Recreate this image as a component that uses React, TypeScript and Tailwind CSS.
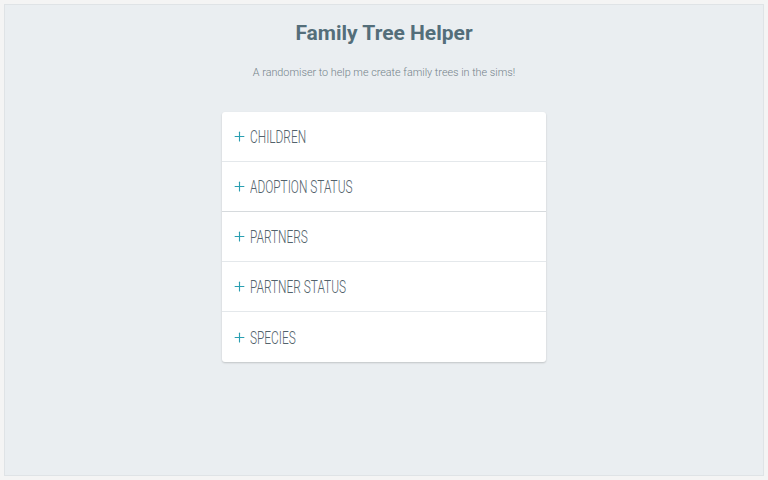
import { Plus } from 'lucide-react';

const sections = ['CHILDREN', 'ADOPTION STATUS', 'PARTNERS', 'PARTNER STATUS', 'SPECIES'];

export default function App() {
    return (
        <div className="w-[768px] h-[480px] bg-[#f4f4f4] p-[4px]">
            <div className="h-full bg-[#eaeef1] border border-[#dfe3e6] flex flex-col items-center" style={{ fontFamily: 'Roboto, "Liberation Sans", sans-serif' }}>
                <h1 className="mt-[13px] text-[21px] leading-[30px] font-bold text-[#546e7a]">Family Tree Helper</h1>
                <p className="mt-[18px] text-[10.8px] leading-[14px] font-light text-[#74828a]">A randomiser to help me create family trees in the sims!</p>
                <ul className="mt-[32px] w-[324px] bg-white rounded-[3px] shadow-[0_1px_2px_rgba(0,0,0,0.18)]">
                    {sections.map((s, i) => (
                        <li
                            key={s}
                            className={`h-[50px] flex items-center pl-[10px] ${i < sections.length - 1 ? 'border-b' : ''} ${i === 1 ? 'border-[#d6dadd]' : 'border-[#e4e8eb]'}`}
                        >
                            <Plus className="w-[15px] h-[15px] text-[#2a9fb2]" strokeWidth={1.8} />
                            <span className="ml-[3px] inline-block origin-left scale-x-[0.66] text-[18px] font-light text-[#52626b] whitespace-nowrap">
                                {s}
                            </span>
                        </li>
                    ))}
                </ul>
            </div>
        </div>
    );
}
